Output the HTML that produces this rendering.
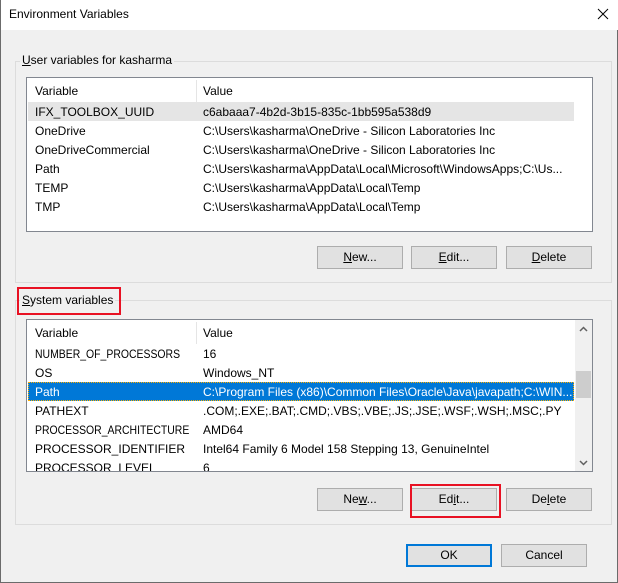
<!DOCTYPE html>
<html><head><meta charset="utf-8"><style>
*{box-sizing:border-box;margin:0;padding:0}
body{width:618px;height:583px;overflow:hidden;background:#f0f0f0;font-family:"Liberation Sans",sans-serif;font-size:12px;color:#000;position:relative}
.a{position:absolute;white-space:nowrap}
.win{position:absolute;left:0;top:0;width:618px;height:583px;border:1px solid #6b6b6b;border-top:none}
.title{position:absolute;left:0;top:0;width:618px;height:30px;background:#fff;border-left:1px solid #6b6b6b}
.grp{position:absolute;border:1px solid #dcdcdc}
.lbl{position:absolute;background:#f0f0f0;padding:0 2px}
.list{position:absolute;background:#fff;border:1px solid #828790;overflow:hidden}
.btn{position:absolute;height:23px;background:#e1e1e1;border:1px solid #adadad;text-align:center;line-height:21px}
.row{position:absolute;left:1px;height:19px;line-height:20px;width:546px}
.row span{position:absolute}
.row .v{left:7px}.row .w{left:175px}
.row .s{transform:scaleX(0.87);transform-origin:0 0}
u{text-decoration:underline}
</style></head><body>
<div class="win"></div>
<div class="title"><span class="a" style="left:8px;top:7px">Environment Variables</span>
<svg class="a" style="left:596px;top:8px" width="12" height="12"><path d="M1 1L11 11M11 1L1 11" stroke="#000" stroke-width="1"/></svg></div>

<div class="grp" style="left:15px;top:61px;width:597px;height:222px"></div>
<span class="lbl a" style="left:20px;top:53px"><u>U</u>ser variables for kasharma</span>
<div class="list" style="left:26px;top:77px;width:567px;height:155px">
<span class="a" style="left:8px;top:6px">Variable</span>
<div class="a" style="left:169px;top:2px;width:1px;height:22px;background:#e5e5e5"></div>
<span class="a" style="left:176px;top:6px">Value</span>
<div class="row" style="top:24px;background:#e5e5e5"><span class="v">IFX_TOOLBOX_UUID</span><span class="w">c6abaaa7-4b2d-3b15-835c-1bb595a538d9</span></div>
<div class="row" style="top:43px"><span class="v">OneDrive</span><span class="w">C:\Users\kasharma\OneDrive - Silicon Laboratories Inc</span></div>
<div class="row" style="top:62px"><span class="v">OneDriveCommercial</span><span class="w">C:\Users\kasharma\OneDrive - Silicon Laboratories Inc</span></div>
<div class="row" style="top:81px"><span class="v">Path</span><span class="w">C:\Users\kasharma\AppData\Local\Microsoft\WindowsApps;C:\Us...</span></div>
<div class="row" style="top:100px"><span class="v">TEMP</span><span class="w">C:\Users\kasharma\AppData\Local\Temp</span></div>
<div class="row" style="top:119px"><span class="v">TMP</span><span class="w">C:\Users\kasharma\AppData\Local\Temp</span></div>
</div>
<div class="btn" style="left:317px;top:246px;width:86px"><u>N</u>ew...</div>
<div class="btn" style="left:411px;top:246px;width:86px"><u>E</u>dit...</div>
<div class="btn" style="left:506px;top:246px;width:86px"><u>D</u>elete</div>

<div class="grp" style="left:15px;top:300px;width:597px;height:225px"></div>
<span class="lbl a" style="left:20px;top:293px"><u>S</u>ystem variables</span>
<div class="a" style="left:17px;top:287px;width:104px;height:28px;border:2px solid #e81123"></div>
<div class="list" style="left:26px;top:319px;width:567px;height:153px">
<span class="a" style="left:8px;top:6px">Variable</span>
<div class="a" style="left:169px;top:2px;width:1px;height:22px;background:#e5e5e5"></div>
<span class="a" style="left:176px;top:6px">Value</span>
<div class="row" style="top:24px"><span class="v s">NUMBER_OF_PROCESSORS</span><span class="w">16</span></div>
<div class="row" style="top:43px"><span class="v">OS</span><span class="w">Windows_NT</span></div>
<div class="row" style="top:62px;background:#0078d7;color:#fff;outline:1px dotted #ffb000;outline-offset:-1px"><span class="v">Path</span><span class="w">C:\Program Files (x86)\Common Files\Oracle\Java\javapath;C:\WIN...</span></div>
<div class="row" style="top:81px"><span class="v">PATHEXT</span><span class="w">.COM;.EXE;.BAT;.CMD;.VBS;.VBE;.JS;.JSE;.WSF;.WSH;.MSC;.PY</span></div>
<div class="row" style="top:100px"><span class="v s">PROCESSOR_ARCHITECTURE</span><span class="w">AMD64</span></div>
<div class="row" style="top:119px"><span class="v">PROCESSOR_IDENTIFIER</span><span class="w">Intel64 Family 6 Model 158 Stepping 13, GenuineIntel</span></div>
<div class="row" style="top:138px"><span class="v">PROCESSOR_LEVEL</span><span class="w">6</span></div>
<div class="a" style="left:548px;top:0;width:17px;height:151px;background:#f0f0f0"></div>
<div class="a" style="left:549px;top:51px;width:15px;height:27px;background:#cdcdcd"></div>
<svg class="a" style="left:552px;top:6px" width="9" height="6"><path d="M1 5L4.5 1.5L8 5" stroke="#606060" stroke-width="1.5" fill="none"/></svg>
<svg class="a" style="left:552px;top:140px" width="9" height="6"><path d="M1 1L4.5 4.5L8 1" stroke="#606060" stroke-width="1.5" fill="none"/></svg>
</div>
<div class="btn" style="left:317px;top:488px;width:86px">Ne<u>w</u>...</div>
<div class="btn" style="left:411px;top:488px;width:86px">Ed<u>i</u>t...</div>
<div class="a" style="left:410px;top:484px;width:91px;height:34px;border:2px solid #e81123"></div>
<div class="btn" style="left:506px;top:488px;width:86px">De<u>l</u>ete</div>

<div class="btn" style="left:406px;top:544px;width:86px;border:2px solid #0078d7;line-height:19px">OK</div>
<div class="btn" style="left:501px;top:544px;width:86px">Cancel</div>
</body></html>
